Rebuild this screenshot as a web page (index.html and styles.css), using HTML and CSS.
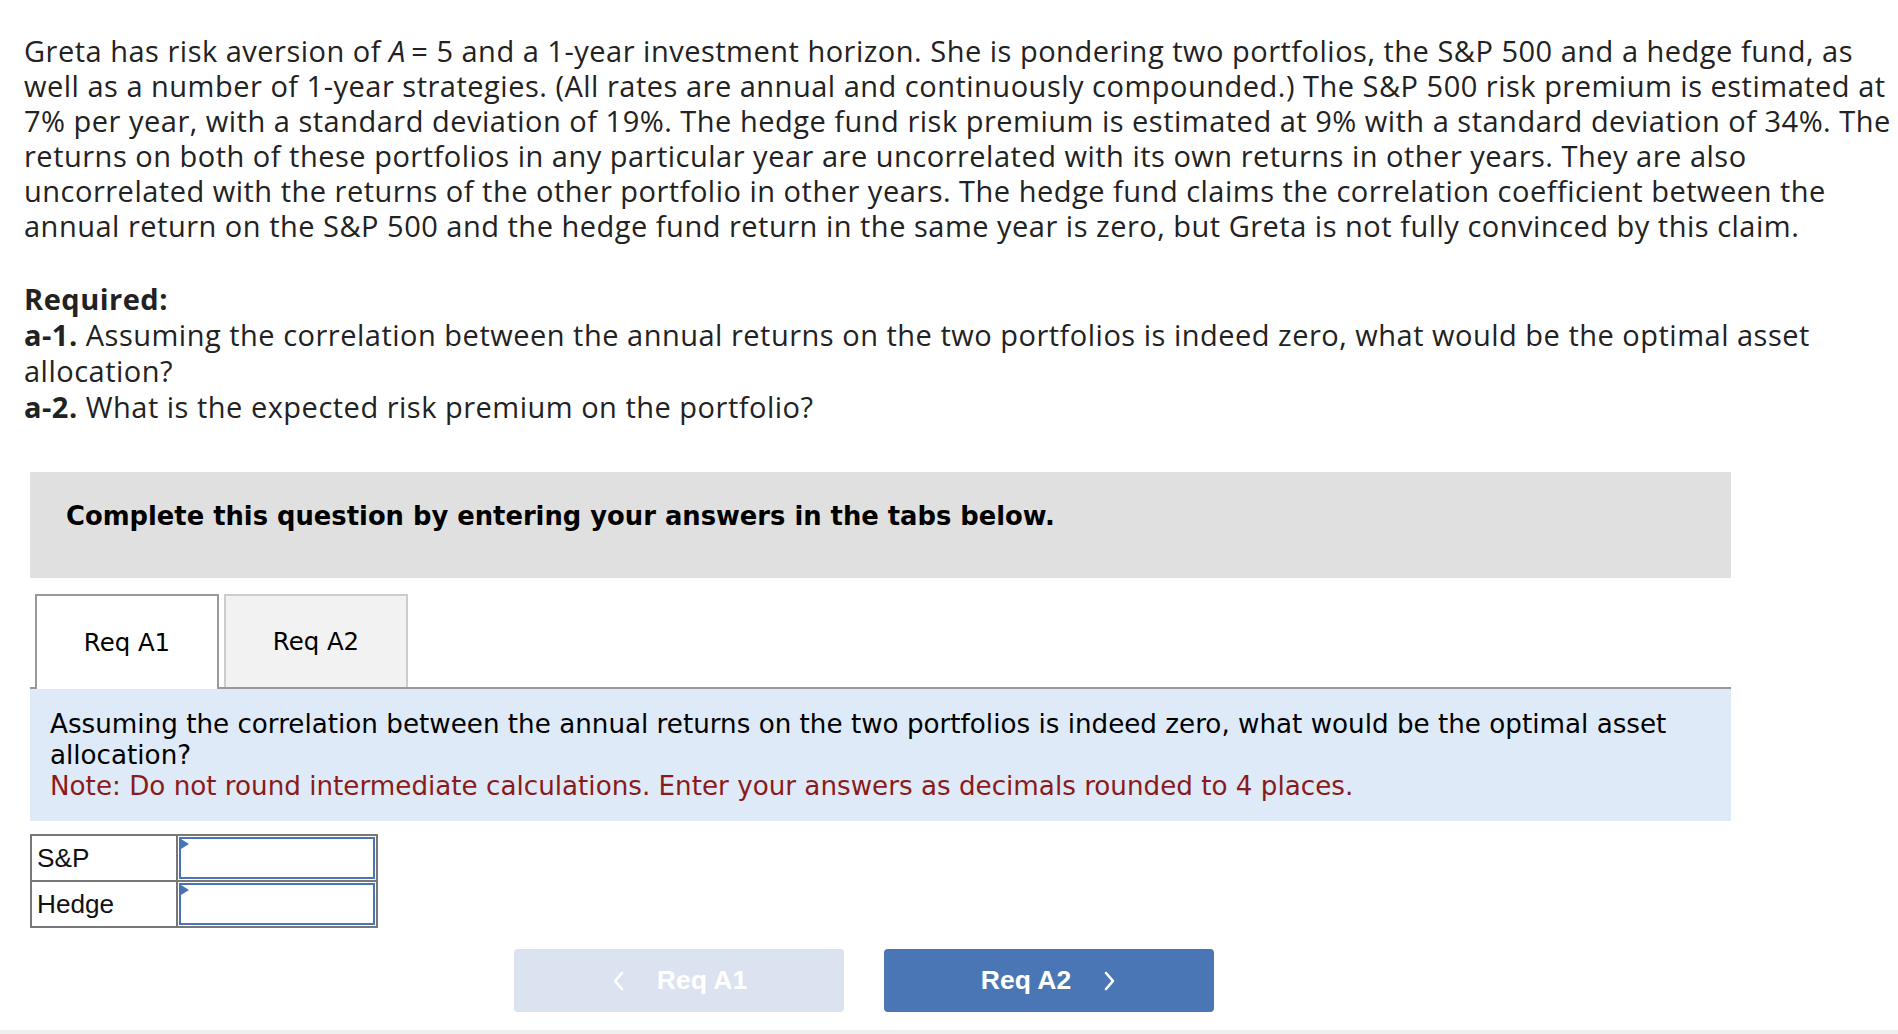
FILE: index.html
```html
<!DOCTYPE html>
<html lang="en">
<head>
<meta charset="utf-8">
<title>Question</title>
<link rel="stylesheet" href="styles.css">
</head>
<body>
<div class="page">
  <p class="intro">Greta has risk aversion of <i class="var">A</i>&#8202;= 5 and a 1-year investment horizon. She is pondering two portfolios, the S&amp;P 500 and a hedge fund, as well as a number of 1-year strategies. (All rates are annual and continuously compounded.) The S&amp;P 500 risk premium is estimated at 7% per year, with a standard deviation of 19%. The hedge fund risk premium is estimated at 9% with a standard deviation of 34%. The returns on both of these portfolios in any particular year are uncorrelated with its own returns in other years. They are also uncorrelated with the returns of the other portfolio in other years. The hedge fund claims the correlation coefficient between the annual return on the S&amp;P 500 and the hedge fund return in the same year is zero, but Greta is not fully convinced by this claim.</p>

  <div class="required">
    <div class="req-title">Required:</div>
    <div><b>a-1.</b> Assuming the correlation between the annual returns on the two portfolios is indeed zero, what would be the optimal asset allocation?</div>
    <div><b>a-2.</b> What is the expected risk premium on the portfolio?</div>
  </div>

  <div class="question">
    <div class="banner">Complete this question by entering your answers in the tabs below.</div>

    <div class="tabs">
      <div class="tab active">Req A1</div>
      <div class="tab">Req A2</div>
    </div>

    <div class="panel">
      <div>Assuming the correlation between the annual returns on the two portfolios is indeed zero, what would be the optimal asset allocation?</div>
      <div class="note">Note: Do not round intermediate calculations. Enter your answers as decimals rounded to 4 places.</div>
    </div>

    <table class="answers">
      <tr>
        <td class="label">S&amp;P</td>
        <td class="cell"><div class="input"><span class="marker"></span></div></td>
      </tr>
      <tr>
        <td class="label">Hedge</td>
        <td class="cell"><div class="input"><span class="marker"></span></div></td>
      </tr>
    </table>

    <div class="nav">
      <div class="btn prev">
        <svg class="chev" width="14" height="20" viewBox="0 0 14 20"><path d="M11 2 L4 10 L11 18" fill="none" stroke="#fff" stroke-width="2.6" stroke-linecap="round" stroke-linejoin="round"/></svg>
        <span>Req A1</span>
      </div>
      <div class="btn next">
        <span>Req A2</span>
        <svg class="chev" width="14" height="20" viewBox="0 0 14 20"><path d="M3 2 L10 10 L3 18" fill="none" stroke="#fff" stroke-width="2.6" stroke-linecap="round" stroke-linejoin="round"/></svg>
      </div>
    </div>
  </div>
</div>
<div class="footer"></div>
</body>
</html>
```

FILE: styles.css
```css
html, body {
  margin: 0;
  padding: 0;
  background: #ffffff;
}

.page {
  padding: 33px 0 0 24px;
  color: #222222;
  font-family: "Open Sans", "Liberation Sans", sans-serif;
}

.intro {
  margin: 0;
  font-size: 29px;
  line-height: 35px;
  letter-spacing: 0.5px;
  max-width: 1868px;
}

.var {
  margin-right: 2px;
}

.required {
  margin-top: 38px;
  font-size: 29px;
  line-height: 36px;
  letter-spacing: 0.5px;
  max-width: 1840px;
}

.req-title {
  font-weight: bold;
}

.question {
  margin: 47px 0 0 6px;
  width: 1701px;
  font-family: "DejaVu Sans", Verdana, sans-serif;
  color: #000000;
}

.banner {
  background: #e0e0e0;
  height: 106px;
  box-sizing: border-box;
  padding: 29px 36px 0 36px;
  font-size: 25.8px;
  line-height: 30px;
  font-weight: bold;
}

.tabs {
  margin-top: 16px;
  display: flex;
  gap: 5px;
  padding-left: 5px;
  border-bottom: 2px solid #999999;
  height: 95px;
  box-sizing: border-box;
}

.tab {
  width: 184px;
  height: 93px;
  box-sizing: border-box;
  border: 2px solid #cccccc;
  border-bottom: none;
  background: #f2f2f2;
  display: flex;
  align-items: center;
  justify-content: center;
  font-size: 24.4px;
  color: #000;
}

.tab.active {
  border-color: #999999;
  background: #ffffff;
  height: 95px;
  position: relative;
}

.panel {
  background: #deeaf7;
  padding: 20px 20px 19px 20px;
  font-size: 26.2px;
  line-height: 31px;
}

.note {
  color: #8b1a1a;
}

.answers {
  margin-top: 13px;
  border-collapse: collapse;
  font-family: "Liberation Sans", Arial, sans-serif;
  font-size: 26.2px;
  color: #111;
}

.answers td {
  border: 2px solid #777777;
  height: 44px;
  padding: 0;
}

.label {
  width: 146px;
  padding-left: 5px !important;
  box-sizing: border-box;
}

.cell {
  width: 198px;
  vertical-align: middle;
}

.input {
  position: relative;
  height: 42px;
  margin: 1px;
  border: 2px solid #4a73b5;
  box-sizing: border-box;
  background: #fff;
}

.marker {
  position: absolute;
  left: 0;
  top: 0;
  width: 0;
  height: 0;
  border-top: 5px solid transparent;
  border-bottom: 5px solid transparent;
  border-left: 8px solid #4a73b5;
}

.nav {
  margin: 21px 0 0 484px;
  display: flex;
  gap: 40px;
}

.btn {
  width: 330px;
  height: 63px;
  border-radius: 4px;
  display: flex;
  align-items: center;
  justify-content: center;
  gap: 32px;
  font-family: "Liberation Sans", Arial, sans-serif;
  font-weight: bold;
  font-size: 26.5px;
  color: #ffffff;
}

.btn.prev {
  background: #dae3ef;
}

.btn.next {
  background: #4a76b5;
}

.chev {
  display: block;
}

.footer {
  margin-top: 18px;
  height: 4px;
  background: #efefef;
}
```
